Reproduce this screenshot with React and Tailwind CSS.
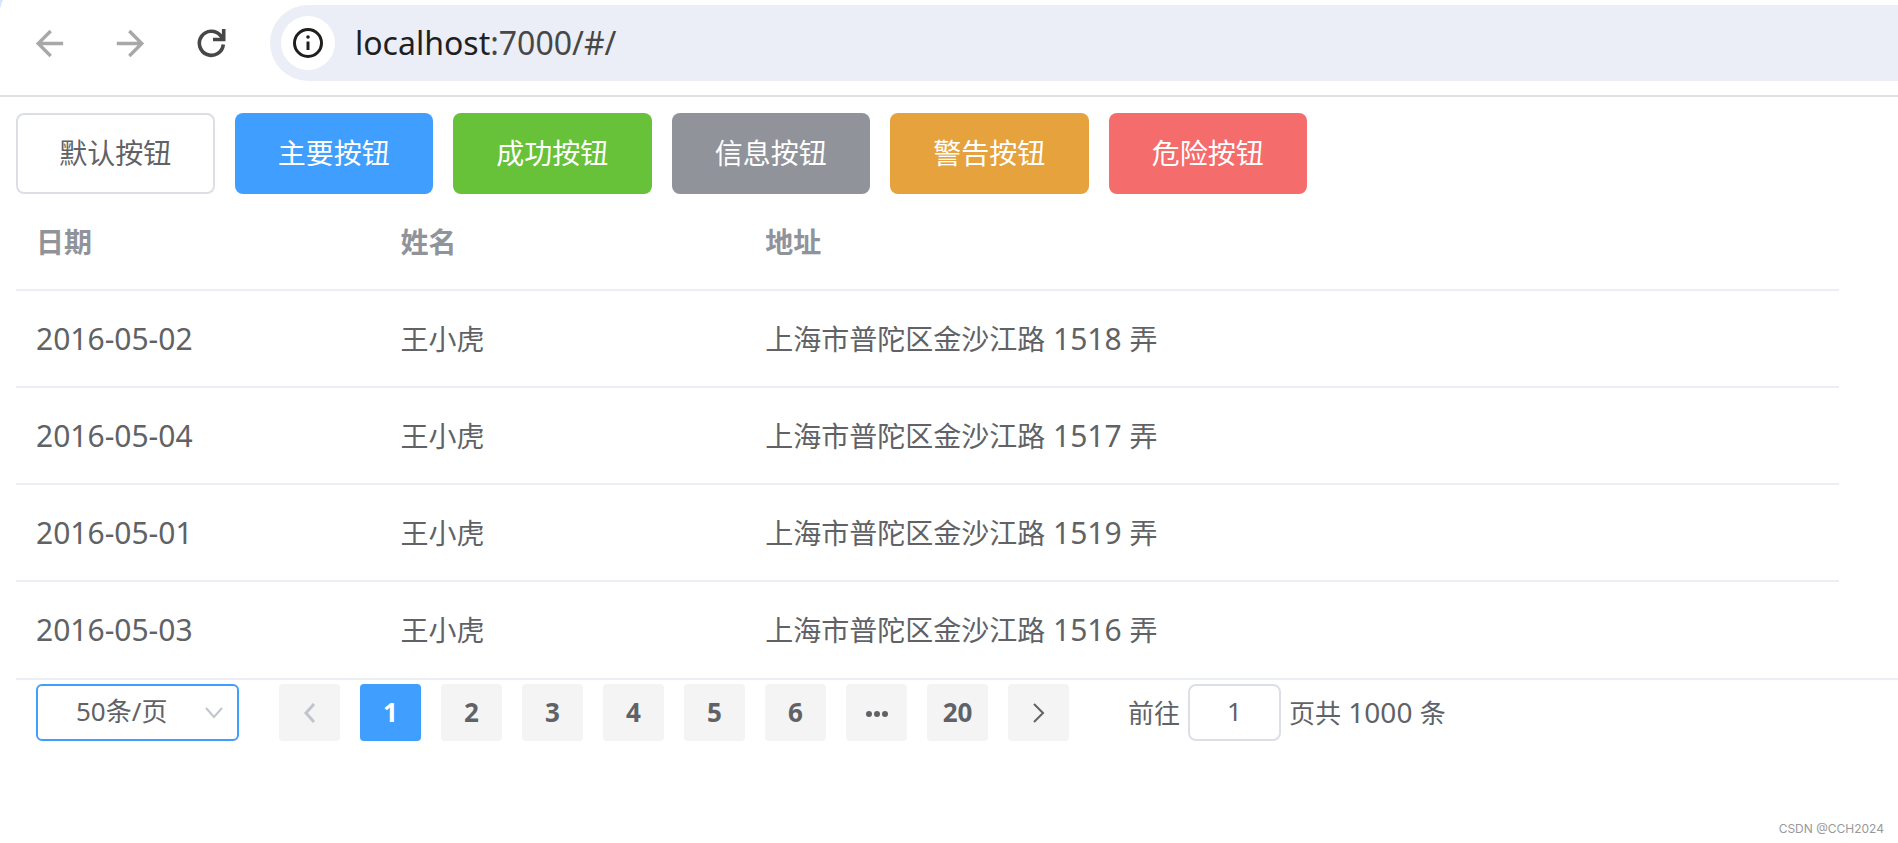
import React, { useState } from 'react';

const buttons = [
  { label: '默认按钮', className: 'border-2 border-[#dcdfe6] bg-white text-[#606266]' },
  { label: '主要按钮', className: 'bg-[#409eff] text-white' },
  { label: '成功按钮', className: 'bg-[#67c23a] text-white' },
  { label: '信息按钮', className: 'bg-[#909399] text-white' },
  { label: '警告按钮', className: 'bg-[#e6a23c] text-white' },
  { label: '危险按钮', className: 'bg-[#f56c6c] text-white' },
];

const tableData = [
  { date: '2016-05-02', name: '王小虎', road: '上海市普陀区金沙江路', no: 1518 },
  { date: '2016-05-04', name: '王小虎', road: '上海市普陀区金沙江路', no: 1517 },
  { date: '2016-05-01', name: '王小虎', road: '上海市普陀区金沙江路', no: 1519 },
  { date: '2016-05-03', name: '王小虎', road: '上海市普陀区金沙江路', no: 1516 },
];

const pages = ['1', '2', '3', '4', '5', '6', '...', '20'];

const AddressBar = () => (
  <header className="relative flex h-[97px] items-start border-b-2 border-[#e1e1e1] pt-[5px]">
    {/* tab strip corner */}
    <svg className="absolute left-0 top-0" width="4" height="10" viewBox="0 0 4 10">
      <path d="M0 0H3C1.500 2 1 5 0 9Z" fill="#d3e3fd" />
    </svg>
    <nav className="flex h-[76px] items-center gap-10 pl-[29px]">
      <button aria-label="Back">
        <svg width="41" height="41" viewBox="0 0 24 24" fill="#a8a8a8">
          <path d="M20 11H7.830l5.590-5.590L12 4l-8 8 8 8 1.410-1.410L7.830 13H20v-2z" />
        </svg>
      </button>
      <button aria-label="Forward">
        <svg width="41" height="41" viewBox="0 0 24 24" fill="#a8a8a8">
          <path d="M12 4l-1.410 1.410L16.170 11H4v2h12.170l-5.580 5.590L12 20l8-8z" />
        </svg>
      </button>
      <button aria-label="Reload">
        <svg width="41" height="41" viewBox="0 0 41 41" fill="none" stroke="#474747" strokeWidth="3.6">
          <path d="M32.300 21.500A12 12 0 1 1 29.500 12.500L32 15.500" />
          <path d="M32.700 6V16.500H22" />
        </svg>
      </button>
    </nav>
    <div className="ml-[38px] flex h-[76px] flex-1 items-center rounded-l-full bg-[#ebeef7] pl-[11px]">
      <button aria-label="Site information" className="flex size-[54px] items-center justify-center rounded-full bg-white">
        <svg width="32" height="32" viewBox="0 0 32 32" fill="none" stroke="#1f1f1f" strokeWidth="3">
          <circle cx="16" cy="16" r="13.500" />
          <path d="M16 14.500V23" />
          <circle cx="16" cy="10" r="1.800" fill="#1f1f1f" stroke="none" />
        </svg>
      </button>
      <span className="ml-5 text-[32px] leading-[40px] text-[#474747]">
        <span className="text-[#1f1f1f]">localhost</span>:7000/#/
      </span>
    </div>
  </header>
);

const DataTable = () => (
  <div className="border-b-2 border-[#ebeef5] pr-[59px]">
    <table className="w-full table-fixed border-separate border-spacing-0 text-left text-[28px] leading-[40px] text-[#606266]">
      <thead>
        <tr className="h-[97px] text-[#909399] *:border-b-2 *:border-[#ebeef5]">
          <th className="w-1/5 pl-5 font-bold">日期</th>
          <th className="w-1/5 pl-5 font-bold">姓名</th>
          <th className="pl-5 font-bold">地址</th>
        </tr>
      </thead>
      <tbody>
        {tableData.map((row) => (
          <tr
            key={row.date}
            className="h-[97px] *:border-b-2 *:border-[#ebeef5] last:h-24 last:*:border-b-0"
          >
            <td className="pl-5 text-[30px]">{row.date}</td>
            <td className="pl-5">{row.name}</td>
            <td className="pl-5">
              {row.road}
              <span className="text-[30px]"> {row.no} </span>弄
            </td>
          </tr>
        ))}
      </tbody>
    </table>
  </div>
);

const Pagination = () => {
  const [current, setCurrent] = useState('1');
  const [size, setSize] = useState('50');
  const [jump, setJump] = useState('1');

  return (
    <div className="flex items-center pl-5 pt-1 text-[26px] leading-[40px] text-[#606266]">
      <div className="relative">
        <select
          aria-label="每页条数"
          value={size}
          onChange={(e) => setSize(e.target.value)}
          className="block h-[57px] w-[203px] appearance-none rounded-md border-2 border-[#409eff] bg-white pb-1 pl-[38px] outline-none"
        >
          <option value="50">50条/页</option>
          <option value="100">100条/页</option>
        </select>
        <svg
          className="pointer-events-none absolute right-4 top-[23px]"
          width="18" height="12" viewBox="0 0 18 12" fill="none" stroke="#c0c4cc" strokeWidth="2"
        >
          <path d="M1 1L9 10L17 1" />
        </svg>
      </div>
      <div className="ml-10 flex gap-5">
        <button aria-label="上一页" className="flex h-[57px] w-[61px] items-center justify-center rounded bg-[#f4f4f5]">
          <svg width="12" height="20" viewBox="0 0 12 20" fill="none" stroke="#c0c4cc" strokeWidth="3">
            <path d="M10 1L2 10L10 19" />
          </svg>
        </button>
        {pages.map((p) => (
          <button
            key={p}
            aria-label={p === '...' ? '更多' : undefined}
            onClick={() => p !== '...' && setCurrent(p)}
            className={`flex h-[57px] w-[61px] items-center justify-center rounded pb-0.5 font-bold ${
              p === current ? 'bg-[#409eff] text-white' : 'bg-[#f4f4f5] text-[#606266]'
            }`}
          >
            {p === '...' ? (
              <svg width="24" height="8" viewBox="0 0 24 8" fill="#606266" className="mt-1">
                <circle cx="4" cy="4" r="3" />
                <circle cx="12" cy="4" r="3" />
                <circle cx="20" cy="4" r="3" />
              </svg>
            ) : (
              p
            )}
          </button>
        ))}
        <button aria-label="下一页" className="flex h-[57px] w-[61px] items-center justify-center rounded bg-[#f4f4f5]">
          <svg width="12" height="20" viewBox="0 0 12 20" fill="none" stroke="#606266" strokeWidth="2">
            <path d="M1 1L10 10L1 19" />
          </svg>
        </button>
      </div>
      <label className="ml-[59px] flex items-center gap-2">
        前往
        <input
          type="text"
          value={jump}
          onChange={(e) => setJump(e.target.value)}
          className="h-[57px] w-[93px] rounded-lg border-2 border-[#dcdfe6] pb-1 text-center outline-none"
        />
        页
      </label>
      <span>
        共<span className="text-[28px]"> 1000 </span>条
      </span>
    </div>
  );
};

const App = () => {
  return (
    <div className="relative min-h-screen overflow-hidden bg-white font-['Noto_Sans','Noto_Sans_CJK_SC',sans-serif]">
      <AddressBar />
      <main className="pl-4 pt-4">
        <div className="grid w-[1291px] grid-cols-6 gap-5 text-[28px] leading-[40px]">
          {buttons.map((b) => (
            <button key={b.label} className={`h-[81px] rounded-lg pb-0.5 ${b.className}`}>
              {b.label}
            </button>
          ))}
        </div>
        <DataTable />
        <Pagination />
      </main>
      <span className="absolute bottom-1 right-[14px] font-['Inter',sans-serif] text-xs leading-[20px] text-[#999999]">
        CSDN @CCH2024
      </span>
    </div>
  );
};

export default App;
